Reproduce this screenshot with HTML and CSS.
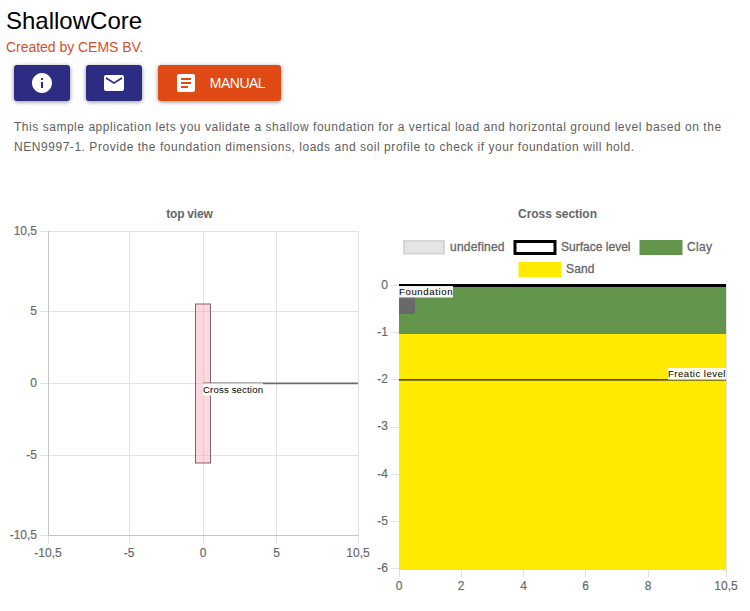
FILE: index.html
```html
<!DOCTYPE html>
<html lang="en">
<head>
<meta charset="utf-8">
<title>ShallowCore</title>
<link rel="stylesheet" href="styles.css">
</head>
<body>
<header>
  <h1>ShallowCore</h1>
  <p class="author">Created by CEMS BV.</p>
</header>
<nav class="actions">
  <button class="button" aria-label="Info"><svg class="icon" viewBox="0 0 24 24"><path d="M12 2C6.480 2 2 6.480 2 12s4.480 10 10 10 10-4.480 10-10S17.520 2 12 2zm1 15h-2v-6h2v6zm0-8h-2V7h2v2z"/></svg></button>
  <button class="button" aria-label="Mail"><svg class="icon" viewBox="0 0 24 24"><path d="M20 4H4c-1.100 0-1.990.9-1.990 2L2 18c0 1.100.9 2 2 2h16c1.100 0 2-.9 2-2V6c0-1.100-.9-2-2-2zm0 4l-8 5-8-5V6l8 5 8-5v2z"/></svg></button>
  <button class="button manual"><svg class="icon" viewBox="0 0 24 24"><path d="M19 3H5c-1.100 0-2 .9-2 2v14c0 1.100.9 2 2 2h14c1.100 0 2-.9 2-2V5c0-1.100-.9-2-2-2zm-5 14H7v-2h7v2zm3-4H7v-2h10v2zm0-4H7V7h10v2z"/></svg><span>MANUAL</span></button>
</nav>
<p class="intro">
  <span class="line-one">This sample application lets you validate a shallow foundation for a vertical load and horizontal ground level based on the</span>
  <span class="line-two">NEN9997-1. Provide the foundation dimensions, loads and soil profile to check if your foundation will hold.</span>
</p>
<main class="charts">
  <svg class="chart" viewBox="0 200 375 411" width="375" height="411">
    <text class="title" x="189.500" y="218" textLength="46.500">top view</text>
    <path class="grid" d="M40 231.500H358.500M40 311.500H358.500M40 383.500H358.500M40 455.500H358.500M40 535.500H48M129.500 231V544M203.500 231V544M276.500 231V544M358.500 231V544M48.500 535V544"/>
    <path class="axis" d="M48.500 231V535.500H358.500"/>
    <rect class="footprint" x="195.500" y="304" width="15" height="159"/>
    <path class="section-line" d="M203 383.300H358"/>
    <rect class="label-bg" x="203" y="383.300" width="60" height="12.200"/>
    <text class="note" x="203" y="393" textLength="60">Cross section</text>
    <g class="y-ticks">
      <text x="37" y="235">10,5</text><text x="37" y="315">5</text><text x="37" y="387">0</text><text x="37" y="459">-5</text><text x="37" y="539">-10,5</text>
    </g>
    <g class="x-ticks">
      <text x="48" y="557">-10,5</text><text x="129" y="557">-5</text><text x="203" y="557">0</text><text x="276.500" y="557">5</text><text x="358" y="557">10,5</text>
    </g>
  </svg>
  <svg class="chart" viewBox="375 200 375 411" width="375" height="411">
    <text class="title" x="557.500" y="218" textLength="79">Cross section</text>
    <rect class="key-undefined" x="404" y="241" width="40" height="12.500"/>
    <text class="key" x="450" y="251" textLength="54.500">undefined</text>
    <rect class="key-surface" x="515" y="241.500" width="40" height="12"/>
    <text class="key" x="561" y="251" textLength="69.500">Surface level</text>
    <rect class="clay" x="639.500" y="240" width="43" height="15"/>
    <text class="key" x="687" y="251" textLength="25">Clay</text>
    <rect class="sand" x="518.500" y="262" width="43" height="15"/>
    <text class="key" x="566" y="273" textLength="28.500">Sand</text>
    <path class="grid" d="M391 285.500H399M391 332.500H399M391 379.500H399M391 427.500H399M391 474.500H399M391 521.500H399M391 568.500H399M399.500 568V577M461.500 568V577M523.500 568V577M585.500 568V577M648.500 568V577M726.500 285V577"/>
    <rect class="clay" x="399" y="285" width="327" height="49"/>
    <rect class="sand" x="399" y="334" width="327" height="236"/>
    <rect class="surface" x="399" y="284" width="327" height="3"/>
    <rect class="foundation" x="399" y="286.500" width="16" height="27.500"/>
    <rect class="label-bg" x="399" y="286" width="54" height="11.500"/>
    <text class="note" x="399" y="295" textLength="53.500">Foundation</text>
    <rect class="freatic" x="399" y="379" width="327" height="1.700"/>
    <rect class="label-bg" x="668" y="368" width="58" height="11.700"/>
    <text class="note" x="668" y="377" textLength="57.500">Freatic level</text>
    <g class="y-ticks">
      <text x="388" y="289">0</text><text x="388" y="336">-1</text><text x="388" y="383">-2</text><text x="388" y="430">-3</text><text x="388" y="478">-4</text><text x="388" y="525">-5</text><text x="388" y="572">-6</text>
    </g>
    <g class="x-ticks">
      <text x="399" y="590">0</text><text x="461" y="590">2</text><text x="523.500" y="590">4</text><text x="585.500" y="590">6</text><text x="648" y="590">8</text><text x="726" y="590">10,5</text>
    </g>
  </svg>
</main>
</body>
</html>
```
FILE: styles.css
```css
body {
  margin: 0;
  width: 750px;
  height: 611px;
  overflow: hidden;
  background: #fff;
  color: #000;
  font-family: "Liberation Sans", Arial, sans-serif;
}
header { padding: 6px 6px 0; }
h1 {
  margin: 0;
  font-size: 24px;
  font-weight: 400;
  line-height: 30px;
}
.author {
  margin: 2px 0 0;
  color: #d4502a;
  font-size: 14px;
  line-height: 18px;
  letter-spacing: -0.03px;
}
.actions {
  display: flex;
  gap: 16px;
  margin: 9px 14px 0;
}
.button {
  display: flex;
  align-items: center;
  justify-content: center;
  width: 56px;
  height: 36px;
  padding: 0;
  border: 0;
  border-radius: 3px;
  background: #2d2c83;
  color: #fff;
  font: 14px/36px "Liberation Sans", Arial, sans-serif;
  box-shadow: 0 1px 4px rgba(0, 0, 0, 0.45);
}
.manual {
  width: 123px;
  gap: 12px;
  background: #e04a14;
  letter-spacing: -0.5px;
}
.icon {
  width: 24px;
  height: 24px;
  fill: #fff;
}
.intro {
  margin: 16px 14px 0;
  height: 83px;
  color: #606060;
  font-size: 12px;
  line-height: 20px;
  white-space: nowrap;
}
.line-one, .line-two { display: block; }
.line-one { letter-spacing: 0.53px; }
.line-two { letter-spacing: 0.545px; }
.charts { display: flex; }
.chart {
  flex: none;
  display: block;
  font-size: 12px;
  fill: #666;
}
.title { font-weight: 700; text-anchor: middle; }
.key { fill: #666; stroke: #666; stroke-width: 0.3px; }
.y-ticks, .x-ticks { stroke: #666; stroke-width: 0.15px; }
.y-ticks { text-anchor: end; }
.x-ticks { text-anchor: middle; }
.note { font-size: 9.600px; fill: #000; }
.grid { fill: none; stroke: #e1e1e1; }
.axis { fill: none; stroke: #c4c4c4; }
.footprint { fill: rgba(249, 171, 185, 0.48); stroke: #81636d; }
.section-line { stroke: #6c6c6c; stroke-width: 1.8px; }
.label-bg { fill: rgba(255, 255, 255, 0.93); }
.key-undefined { fill: #e5e5e5; stroke: #d6d6d6; stroke-width: 2px; }
.key-surface { fill: #fff; stroke: #000; stroke-width: 3px; }
.clay { fill: #63964c; }
.sand { fill: #ffea00; }
.surface { fill: #000; }
.foundation { fill: #696969; }
.freatic { fill: #57511a; }
```
